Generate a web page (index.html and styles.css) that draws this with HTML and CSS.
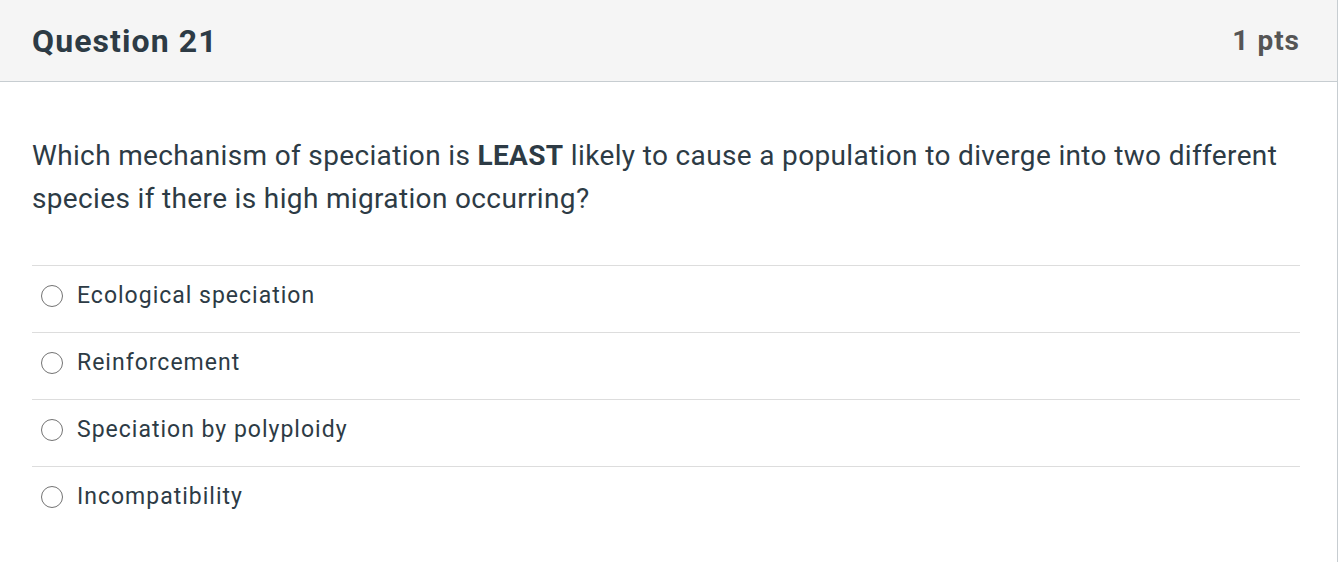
FILE: index.html
```html
<!DOCTYPE html>
<html>
<head>
<meta charset="utf-8">
<link rel="stylesheet" href="styles.css">
</head>
<body>
<div class="question">
  <div class="header">
    <span class="title">Question 21</span>
    <span class="pts">1 pts</span>
  </div>
  <div class="content">
    <p class="text">Which mechanism of speciation is <strong>LEAST</strong> likely to cause a population to diverge into two different species if there is high migration occurring?</p>
    <div class="answers">
      <label class="answer"><span class="radio"></span>Ecological speciation</label>
      <label class="answer"><span class="radio"></span>Reinforcement</label>
      <label class="answer"><span class="radio"></span>Speciation by polyploidy</label>
      <label class="answer"><span class="radio"></span>Incompatibility</label>
    </div>
  </div>
</div>
</body>
</html>
```
FILE: styles.css
```css
html, body {
  margin: 0;
  padding: 0;
  background: #fff;
}
body {
  font-family: Roboto, "Liberation Sans", sans-serif;
  color: #2d3b45;
}
.question {
  width: 1338px;
  height: 562px;
  border-right: 1px solid #c7cdd1;
  box-sizing: border-box;
}
.header {
  height: 82px;
  box-sizing: border-box;
  background: #f5f5f5;
  border-bottom: 1px solid #c7cdd1;
  display: flex;
  align-items: center;
  justify-content: space-between;
  padding: 0 37px 0 32px;
}
.title {
  font-weight: 700;
  font-size: 32px;
  letter-spacing: 1.1px;
  color: #2d3b45;
}
.pts {
  font-weight: 700;
  font-size: 28px;
  letter-spacing: 1px;
  color: #555;
}
.content {
  padding: 0 37px 0 32px;
}
.text {
  margin: 0;
  padding-top: 52px;
  font-size: 28px;
  line-height: 43px;
  letter-spacing: 0.35px;
}
.text strong {
  font-weight: 700;
}
.answers {
  margin-top: 45px;
}
.answer {
  display: flex;
  align-items: center;
  height: 67px;
  box-sizing: border-box;
  padding-bottom: 7px;
  border-top: 1px solid #dddddd;
  font-size: 23px;
  letter-spacing: 1px;
}
.radio {
  width: 22px;
  height: 22px;
  border: 1.5px solid #737373;
  border-radius: 50%;
  margin-left: 9px;
  margin-right: 14px;
  box-sizing: border-box;
  flex: none;
}
```
